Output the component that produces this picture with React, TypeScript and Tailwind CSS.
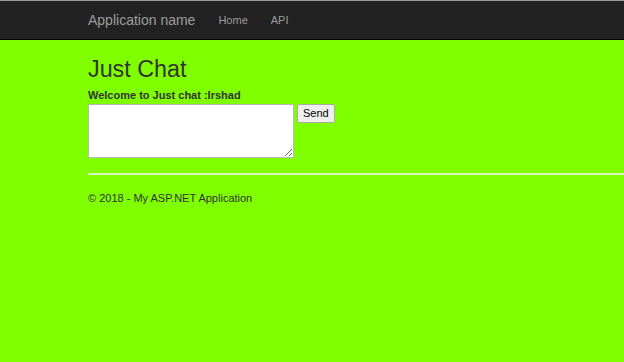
import React from 'react';

export default function App() {
  const navLinks = ['Home', 'API'];

  return (
    <div className="min-h-[362px] bg-[#80ff00] font-['Liberation_Sans',Arial,sans-serif] text-[#333]">
      {/* Navbar */}
      <div className="h-10 bg-[#222222] border-t border-t-[#9a9a9a] border-b border-b-[#080808]">
        <div className="flex items-center h-full pl-[88px]">
          <span className="text-[14px] text-[#9d9d9d] leading-none">Application name</span>
          <div className="flex ml-[23px] gap-[23px]">
            {navLinks.map((link) => (
              <span key={link} className="text-[11px] text-[#9d9d9d] leading-none">
                {link}
              </span>
            ))}
          </div>
        </div>
      </div>

      {/* Body */}
      <div className="pl-[88px]">
        <h2 className="text-[23.3px] leading-none mt-[18px] text-[#333]">Just Chat</h2>
        <div className="text-[11px] font-bold mt-[9px] leading-none">Welcome to Just chat :Irshad</div>
        <div className="flex items-start gap-[3px] mt-[3px]">
          <textarea className="w-[206px] h-[54px] bg-white border border-[#b8b8b8] outline-none" />
          <button className="h-[19px] px-[5px] text-[11px] leading-none bg-[#efefef] border border-[#a8a8a8] rounded-[2px] text-black">
            Send
          </button>
        </div>
        <div className="h-[2px] bg-[#dcf8c0] mt-[15px]" />
        <div className="text-[11px] mt-[18px] leading-none">© 2018 - My ASP.NET Application</div>
      </div>
    </div>
  );
}
